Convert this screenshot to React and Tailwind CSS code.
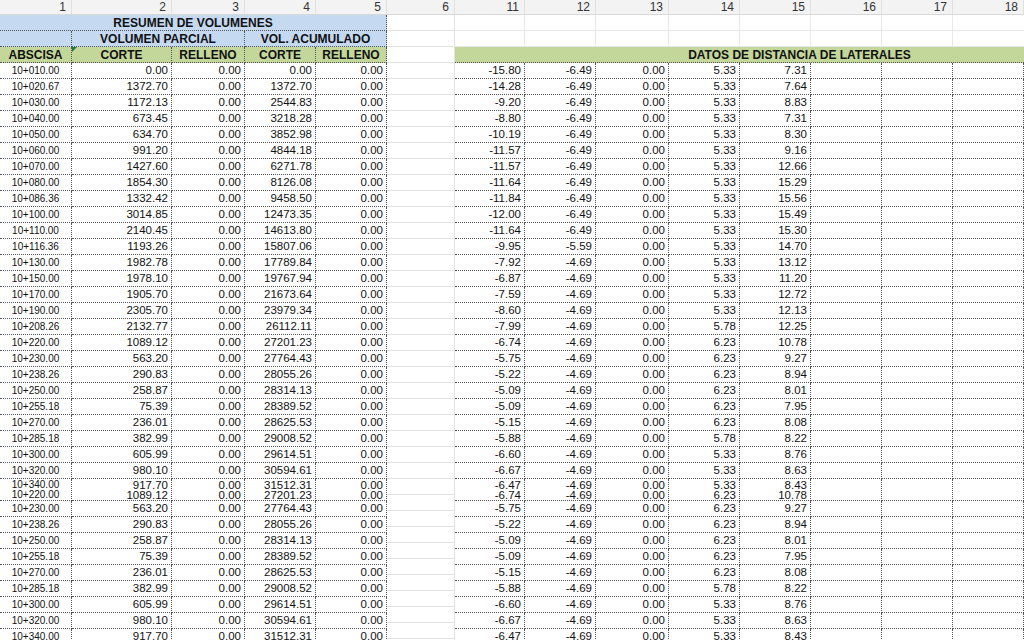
const L = [
  ['10+010.00', '0.00', '0.00'],
  ['10+020.67', '1372.70', '1372.70'],
  ['10+030.00', '1172.13', '2544.83'],
  ['10+040.00', '673.45', '3218.28'],
  ['10+050.00', '634.70', '3852.98'],
  ['10+060.00', '991.20', '4844.18'],
  ['10+070.00', '1427.60', '6271.78'],
  ['10+080.00', '1854.30', '8126.08'],
  ['10+086.36', '1332.42', '9458.50'],
  ['10+100.00', '3014.85', '12473.35'],
  ['10+110.00', '2140.45', '14613.80'],
  ['10+116.36', '1193.26', '15807.06'],
  ['10+130.00', '1982.78', '17789.84'],
  ['10+150.00', '1978.10', '19767.94'],
  ['10+170.00', '1905.70', '21673.64'],
  ['10+190.00', '2305.70', '23979.34'],
  ['10+208.26', '2132.77', '26112.11'],
  ['10+220.00', '1089.12', '27201.23'],
  ['10+230.00', '563.20', '27764.43'],
  ['10+238.26', '290.83', '28055.26'],
  ['10+250.00', '258.87', '28314.13'],
  ['10+255.18', '75.39', '28389.52'],
  ['10+270.00', '236.01', '28625.53'],
  ['10+285.18', '382.99', '29008.52'],
  ['10+300.00', '605.99', '29614.51'],
  ['10+320.00', '980.10', '30594.61'],
]
const EXTRA_L = ['10+340.00', '917.70', '31512.31']

const R = [
  ['-15.80', '-6.49', '5.33', '7.31'],
  ['-14.28', '-6.49', '5.33', '7.64'],
  ['-9.20', '-6.49', '5.33', '8.83'],
  ['-8.80', '-6.49', '5.33', '7.31'],
  ['-10.19', '-6.49', '5.33', '8.30'],
  ['-11.57', '-6.49', '5.33', '9.16'],
  ['-11.57', '-6.49', '5.33', '12.66'],
  ['-11.64', '-6.49', '5.33', '15.29'],
  ['-11.84', '-6.49', '5.33', '15.56'],
  ['-12.00', '-6.49', '5.33', '15.49'],
  ['-11.64', '-6.49', '5.33', '15.30'],
  ['-9.95', '-5.59', '5.33', '14.70'],
  ['-7.92', '-4.69', '5.33', '13.12'],
  ['-6.87', '-4.69', '5.33', '11.20'],
  ['-7.59', '-4.69', '5.33', '12.72'],
  ['-8.60', '-4.69', '5.33', '12.13'],
  ['-7.99', '-4.69', '5.78', '12.25'],
  ['-6.74', '-4.69', '6.23', '10.78'],
  ['-5.75', '-4.69', '6.23', '9.27'],
  ['-5.22', '-4.69', '6.23', '8.94'],
  ['-5.09', '-4.69', '6.23', '8.01'],
  ['-5.09', '-4.69', '6.23', '7.95'],
  ['-5.15', '-4.69', '6.23', '8.08'],
  ['-5.88', '-4.69', '5.78', '8.22'],
  ['-6.60', '-4.69', '5.33', '8.76'],
  ['-6.67', '-4.69', '5.33', '8.63'],
]
const EXTRA_R = ['-6.47', '-4.69', '5.33', '8.43']

const lw = ['w-[72px]', 'w-[100px]', 'w-[73px]', 'w-[71px]', 'w-[71px]']
const rw = ['w-[70px]', 'w-[71px]', 'w-[73px]', 'w-[71px]', 'w-[71px]', 'w-[71px]', 'w-[71px]']
const dot = 'border-r border-b border-dotted border-[#555]'

function LeftRow({ r, h = 'h-4' }) {
  const vals = [r[0], r[1], '0.00', r[2], '0.00']
  return (
    <div className={`flex ${h}`}>
      {vals.map((v, i) => (
        <div key={i} className={`${lw[i]} ${dot} flex items-center px-[3px] ${i === 0 ? 'justify-center text-[10px]' : 'justify-end text-[11.5px]'}`}>{v}</div>
      ))}
    </div>
  )
}

function RightRow({ r }) {
  const vals = [r[0], r[1], '0.00', r[2], r[3], '', '', '']
  return (
    <div className="flex h-4">
      {vals.map((v, i) => (
        <div key={i} className={`${i < 7 ? rw[i] : 'flex-1'} ${dot} flex items-center justify-end px-[3px] text-[11.5px]`}>{v}</div>
      ))}
    </div>
  )
}

function Gap() {
  return <div className="h-4 border-b border-[#e3e3e3]" />
}

export default function App() {
  const heads = [['1', 'w-[72px]'], ['2', 'w-[100px]'], ['3', 'w-[73px]'], ['4', 'w-[71px]'], ['5', 'w-[71px]'], ['6', 'w-[68px]'],
    ['11', 'w-[70px]'], ['12', 'w-[71px]'], ['13', 'w-[73px]'], ['14', 'w-[71px]'], ['15', 'w-[71px]'], ['16', 'w-[71px]'], ['17', 'w-[71px]'], ['18', 'flex-1']]
  const tail = L.slice(18)
  const tailR = R.slice(18)
  return (
    <div className="w-[1024px] h-[640px] overflow-hidden bg-white text-[#111] leading-none" style={{ fontFamily: '"Liberation Sans", Arial, sans-serif' }}>
      <div className="flex h-[15px] bg-[#f3f3f3] border-b border-[#d8d8d8] text-[12px] text-[#333]">
        {heads.map(([t, w]) => (
          <div key={t} className={`${w} border-r border-[#e0e0e0] flex items-center justify-end pr-[5px]`}>{t}</div>
        ))}
      </div>
      <div className="flex">
        <div className="w-[387px] shrink-0">
          <div className="h-4 bg-[#c5d9f1] border-b border-r border-dotted border-[#555] flex items-center justify-center font-bold text-[12px]">RESUMEN DE VOLUMENES</div>
          <div className="flex h-4 bg-[#c5d9f1] font-bold text-[12px]">
            <div className={`w-[72px] ${dot}`} />
            <div className={`w-[173px] ${dot} flex items-center justify-center`}>VOLUMEN PARCIAL</div>
            <div className={`w-[142px] ${dot} flex items-center justify-center`}>VOL. ACUMULADO</div>
          </div>
          <div className="flex h-4 bg-[#c4d79b] font-bold text-[12px]">
            {['ABSCISA', 'CORTE', 'RELLENO', 'CORTE', 'RELLENO'].map((t, i) => (
              <div key={i} className={`${lw[i]} ${dot} flex items-center justify-center relative`}>
                {t}
                {i === 1 && <span className="absolute left-0 top-0 w-0 h-0 border-t-[5px] border-r-[5px] border-t-[#1e7b45] border-r-transparent" />}
              </div>
            ))}
          </div>
          {L.map((r, i) => <LeftRow key={i} r={r} />)}
          <div className="flex h-[22px] text-[11.5px]">
            {[0, 1, 2, 3, 4].map(i => {
              const a = [EXTRA_L[0], EXTRA_L[1], '0.00', EXTRA_L[2], '0.00'][i]
              const b = [L[17][0], L[17][1], '0.00', L[17][2], '0.00'][i]
              return (
                <div key={i} className={`${lw[i]} ${dot} flex flex-col justify-center px-[3px] leading-[10px] ${i === 0 ? 'items-center text-[10px]' : 'items-end'}`}>
                  <span>{a}</span><span>{b}</span>
                </div>
              )
            })}
          </div>
          {tail.map((r, i) => <LeftRow key={i} r={r} />)}
          <LeftRow r={EXTRA_L} />
        </div>
        <div className="w-[68px] shrink-0 border-r border-[#e3e3e3]">
          {Array.from({ length: 40 }).map((_, i) => <Gap key={i} />)}
        </div>
        <div className="flex-1 min-w-0">
          <div className="flex h-4">{rw.map((w, i) => <div key={i} className={`${w} border-r border-b border-[#e8e8e8]`} />)}<div className="flex-1 border-b border-[#e8e8e8]" /></div>
          <div className="flex h-4">{rw.map((w, i) => <div key={i} className={`${w} border-r border-b border-[#e8e8e8]`} />)}<div className="flex-1 border-b border-[#e8e8e8]" /></div>
          <div className="h-4 bg-[#c4d79b] border-b border-dotted border-[#555] flex items-center justify-center pl-[120px] font-bold text-[12px]">DATOS DE DISTANCIA DE LATERALES</div>
          {R.map((r, i) => <RightRow key={i} r={r} />)}
          <div className="flex h-[22px] text-[11.5px]">
            {[0, 1, 2, 3, 4, 5, 6, 7].map(i => {
              const a = [EXTRA_R[0], EXTRA_R[1], '0.00', EXTRA_R[2], EXTRA_R[3], '', '', ''][i]
              const b = [R[17][0], R[17][1], '0.00', R[17][2], R[17][3], '', '', ''][i]
              return (
                <div key={i} className={`${i < 7 ? rw[i] : 'flex-1'} ${dot} flex flex-col justify-center items-end px-[3px] leading-[10px]`}>
                  <span>{a}</span><span>{b}</span>
                </div>
              )
            })}
          </div>
          {tailR.map((r, i) => <RightRow key={i} r={r} />)}
          <RightRow r={EXTRA_R} />
        </div>
      </div>
    </div>
  )
}
